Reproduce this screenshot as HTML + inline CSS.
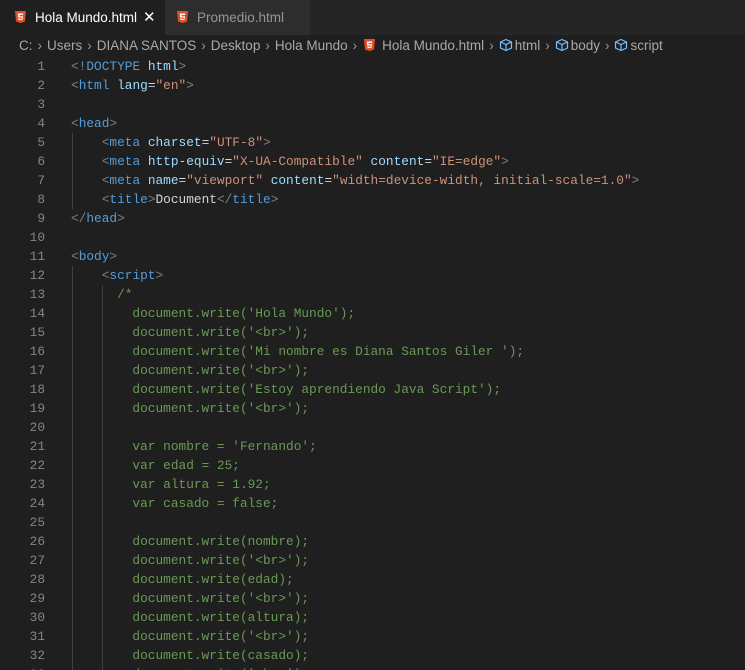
<!DOCTYPE html>
<html style="overflow:hidden;height:670px"><head><style>
body{margin:0;width:745px;height:670px;background:#1f1f1f;overflow:hidden;font-family:"Liberation Sans",sans-serif;position:relative}
.tabs{position:absolute;top:0;left:0;width:745px;height:35px;background:#252526}
.tab{position:absolute;top:0;height:35px;font-size:13.5px;line-height:35px}
.t1{left:0;width:165px;background:#1f1f1f;color:#fff}
.t2{left:165px;width:145px;background:#2d2d2d;color:#969696}
.h5{position:absolute;top:11px;width:11px;height:12px}
.bc{position:absolute;top:37px;left:19px;font-size:13.5px;color:#a9a9a9;line-height:18px;white-space:nowrap}
.bc .s{color:#9a9a9a;margin:0 5px}
.code{position:absolute;top:57px;left:0;width:745px;height:620px;font-family:"Liberation Mono",monospace;font-size:12.8px;line-height:19px}
.ln{position:absolute;top:0;left:0;width:45px;text-align:right;color:#858585;white-space:pre}
.tx{position:absolute;top:0;left:71px;color:#d4d4d4;white-space:pre}
.g{color:#808080}.b{color:#569cd6}.a{color:#9cdcfe}.s{color:#ce9178}.c{color:#6a9955}
.guide{position:absolute;width:1px;background:#404040}
</style></head><body>
<div class="tabs">
<div class="tab t1"><svg class="h5" style="left:15px" viewBox="0 0 11 12"><path d="M0 0h11l-1 10.5L5.5 12 1 10.5z" fill="#e44d26"/><path d="M3 2.5h5.2l-.2 1.5H4.5l.1 1.3h3.3l-.3 3.2-2.1.7-2.1-.7-.1-1.3h1.3l.1.6 1 .3 1-.3.1-1.3H3.2z" fill="#fff"/></svg><span style="position:absolute;left:35px">Hola Mundo.html</span><span style="position:absolute;left:143px;font-size:15px">✕</span></div>
<div class="tab t2"><svg class="h5" style="left:12px" viewBox="0 0 11 12"><path d="M0 0h11l-1 10.5L5.5 12 1 10.5z" fill="#e44d26"/><path d="M3 2.5h5.2l-.2 1.5H4.5l.1 1.3h3.3l-.3 3.2-2.1.7-2.1-.7-.1-1.3h1.3l.1.6 1 .3 1-.3.1-1.3H3.2z" fill="#fff"/></svg><span style="position:absolute;left:32px">Promedio.html</span></div>
</div>
<div class="bc">C:<span class="s">›</span>Users<span class="s">›</span>DIANA SANTOS<span class="s">›</span>Desktop<span class="s">›</span>Hola Mundo<span class="s">›</span><svg width="11" height="12" viewBox="0 0 11 12" style="vertical-align:-1px;margin:0 7px 0 2px"><path d="M0 0h11l-1 10.5L5.5 12 1 10.5z" fill="#e44d26"/><path d="M3 2.5h5.2l-.2 1.5H4.5l.1 1.3h3.3l-.3 3.2-2.1.7-2.1-.7-.1-1.3h1.3l.1.6 1 .3 1-.3.1-1.3H3.2z" fill="#fff"/></svg>Hola Mundo.html<span class="s">›</span><svg width="14" height="14" viewBox="0 0 14 14" style="vertical-align:-2px;margin-right:2px"><path d="M7 1.5l5.5 2.5v6L7 12.5 1.5 10V4z M1.5 4L7 6.5 12.5 4 M7 6.5v6" fill="none" stroke="#75beff" stroke-width="1.2"/></svg>html<span class="s">›</span><svg width="14" height="14" viewBox="0 0 14 14" style="vertical-align:-2px;margin-right:2px"><path d="M7 1.5l5.5 2.5v6L7 12.5 1.5 10V4z M1.5 4L7 6.5 12.5 4 M7 6.5v6" fill="none" stroke="#75beff" stroke-width="1.2"/></svg>body<span class="s">›</span><svg width="14" height="14" viewBox="0 0 14 14" style="vertical-align:-2px;margin-right:2px"><path d="M7 1.5l5.5 2.5v6L7 12.5 1.5 10V4z M1.5 4L7 6.5 12.5 4 M7 6.5v6" fill="none" stroke="#75beff" stroke-width="1.2"/></svg>script</div>
<div class="guide" style="left:72px;top:133px;height:76px"></div>
<div class="guide" style="left:72px;top:266px;height:404px"></div>
<div class="guide" style="left:102px;top:285px;height:385px"></div>
<div class="code"><div class="ln">1
2
3
4
5
6
7
8
9
10
11
12
13
14
15
16
17
18
19
20
21
22
23
24
25
26
27
28
29
30
31
32
33</div><div class="tx"><span class="g">&lt;!</span><span class="b">DOCTYPE</span> <span class="a">html</span><span class="g">&gt;</span>
<span class="g">&lt;</span><span class="b">html</span> <span class="a">lang</span>=<span class="s">"en"</span><span class="g">&gt;</span>

<span class="g">&lt;</span><span class="b">head</span><span class="g">&gt;</span>
    <span class="g">&lt;</span><span class="b">meta</span> <span class="a">charset</span>=<span class="s">"UTF-8"</span><span class="g">&gt;</span>
    <span class="g">&lt;</span><span class="b">meta</span> <span class="a">http-equiv</span>=<span class="s">"X-UA-Compatible"</span> <span class="a">content</span>=<span class="s">"IE=edge"</span><span class="g">&gt;</span>
    <span class="g">&lt;</span><span class="b">meta</span> <span class="a">name</span>=<span class="s">"viewport"</span> <span class="a">content</span>=<span class="s">"width=device-width, initial-scale=1.0"</span><span class="g">&gt;</span>
    <span class="g">&lt;</span><span class="b">title</span><span class="g">&gt;</span>Document<span class="g">&lt;/</span><span class="b">title</span><span class="g">&gt;</span>
<span class="g">&lt;/</span><span class="b">head</span><span class="g">&gt;</span>

<span class="g">&lt;</span><span class="b">body</span><span class="g">&gt;</span>
    <span class="g">&lt;</span><span class="b">script</span><span class="g">&gt;</span>
<span class="c">      /*
        document.write('Hola Mundo');
        document.write('&lt;br&gt;');
        document.write('Mi nombre es Diana Santos Giler ');
        document.write('&lt;br&gt;');
        document.write('Estoy aprendiendo Java Script');
        document.write('&lt;br&gt;');

        var nombre = 'Fernando';
        var edad = 25;
        var altura = 1.92;
        var casado = false;

        document.write(nombre);
        document.write('&lt;br&gt;');
        document.write(edad);
        document.write('&lt;br&gt;');
        document.write(altura);
        document.write('&lt;br&gt;');
        document.write(casado);
        document.write('&lt;br&gt;');</span></div></div>
</body></html>
